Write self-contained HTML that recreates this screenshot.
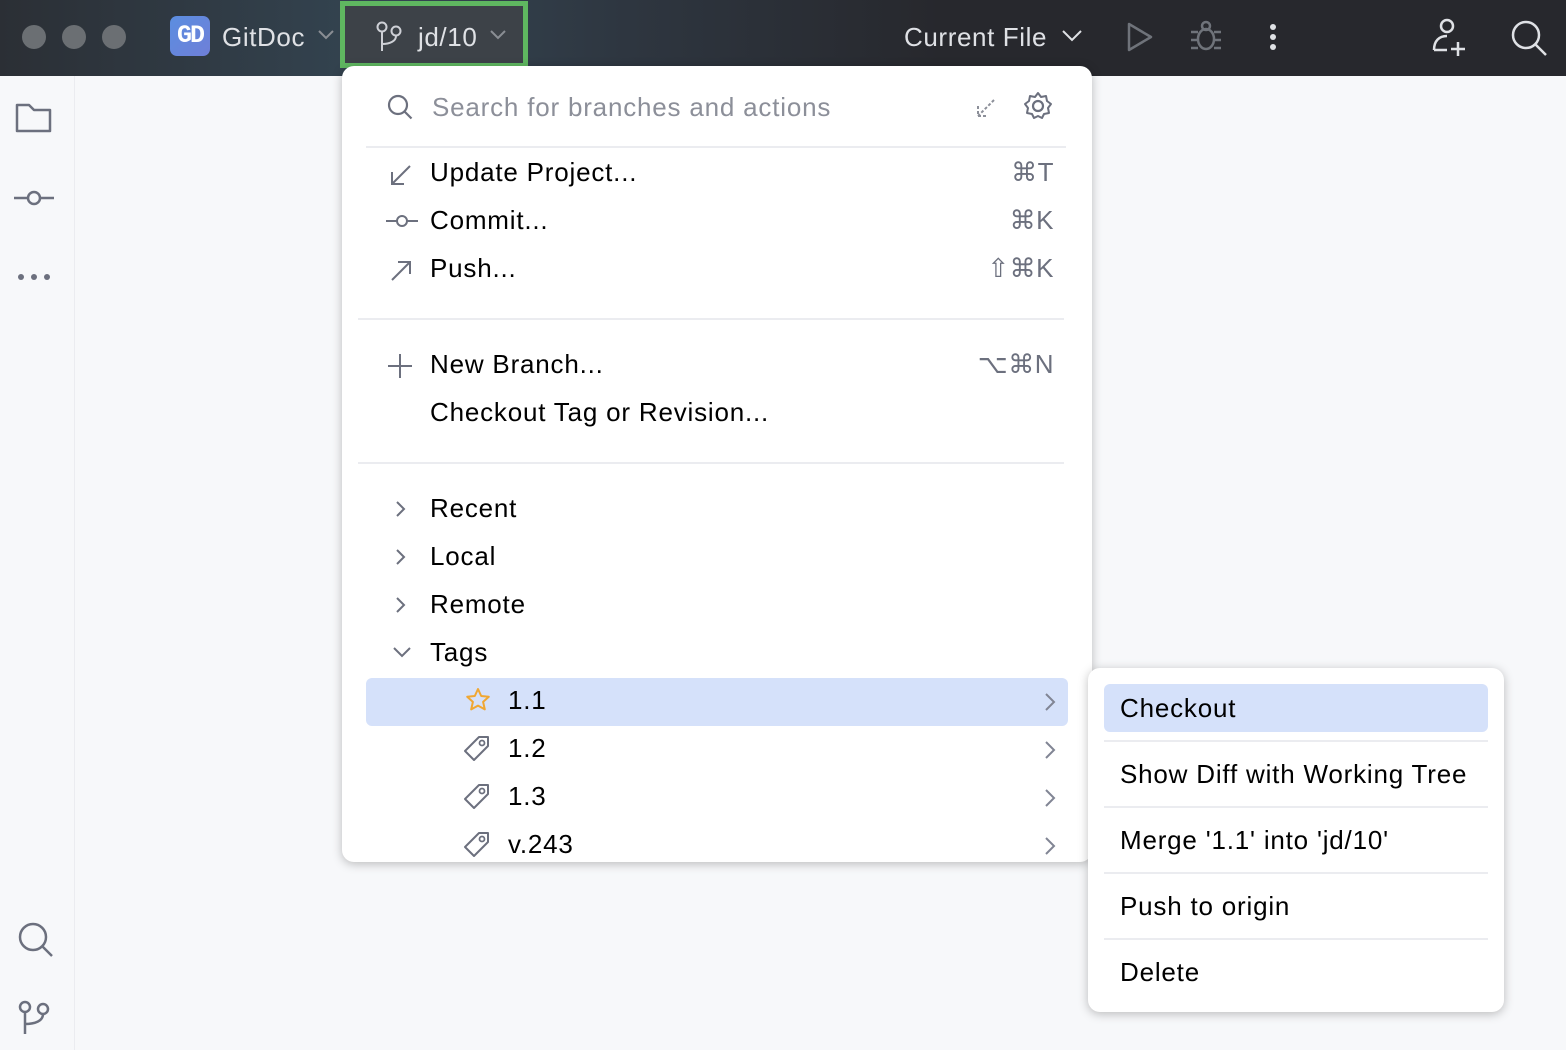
<!DOCTYPE html>
<html><head><meta charset="utf-8"><style>
*{margin:0;padding:0;box-sizing:border-box}
body{width:1566px;height:1050px;overflow:hidden;background:#f7f8fa;font-family:"Liberation Sans",sans-serif;position:relative;color:#000}
.a{position:absolute;white-space:nowrap}
.top{position:absolute;left:0;top:0;width:1566px;height:76px;background:linear-gradient(90deg,#2b2f35 0%,#344552 25%,#2e3640 40%,#27282d 60%,#27282d 100%)}
.side{position:absolute;left:0;top:76px;width:75px;height:974px;background:#f7f8fa;border-right:1px solid #ebecf0}
.pop{position:absolute;left:342px;top:66px;width:750px;height:796px;background:#fff;border-radius:12px;box-shadow:0 2px 10px rgba(0,0,0,.25);overflow:hidden}
.t{font-size:26px;color:#000;letter-spacing:0.8px}
.sc{font-size:26px;color:#6c707e;letter-spacing:0.5px}
.sep{position:absolute;height:2px;background:#ebecf0}
.sub{position:absolute;left:1088px;top:668px;width:416px;height:344px;background:#fff;border-radius:12px;box-shadow:0 2px 10px rgba(0,0,0,.25)}
</style></head><body>
<div class="top"></div>
<div class="a" style="left:22px;top:25px;width:24px;height:24px;border-radius:50%;background:#6b6f73"></div>
<div class="a" style="left:62px;top:25px;width:24px;height:24px;border-radius:50%;background:#6b6f73"></div>
<div class="a" style="left:102px;top:25px;width:24px;height:24px;border-radius:50%;background:#6b6f73"></div>
<div class="a" style="left:170px;top:16px;width:40px;height:40px;border-radius:7px;background:linear-gradient(135deg,#5b8ee0,#6f7fd8);color:#fff;font-size:25px;font-weight:bold;font-family:'Liberation Mono',monospace;line-height:40px;text-align:center;letter-spacing:-2px">GD</div>
<div class="a" style="left:222px;top:22px;font-size:26px;color:#dfe1e5;letter-spacing:0.6px">GitDoc</div>
<svg class="a" style="left:316px;top:28px" width="20" height="14"><path d="M3 3l7 7 7-7" stroke="#8a8e94" stroke-width="2" fill="none"/></svg>
<div class="a" style="left:340px;top:1px;width:188px;height:67px;border:5px solid #5fb760;background:#3d4248"></div>
<svg class="a" style="left:374px;top:20px" width="34" height="34"><circle cx="8" cy="7" r="4.5" stroke="#ced0d6" stroke-width="2" fill="none"/><circle cx="22" cy="11" r="4.5" stroke="#ced0d6" stroke-width="2" fill="none"/><path d="M8 12v19M8 24c8 0 14-3 14-8" stroke="#ced0d6" stroke-width="2" fill="none"/></svg>
<div class="a" style="left:418px;top:22px;font-size:26px;color:#dfe1e5;letter-spacing:0.6px">jd/10</div>
<svg class="a" style="left:488px;top:28px" width="20" height="14"><path d="M3 3l7 7 7-7" stroke="#8a8e94" stroke-width="2" fill="none"/></svg>
<div class="a" style="left:904px;top:22px;font-size:26px;color:#dfe1e5;letter-spacing:0.6px">Current File</div>
<svg class="a" style="left:1060px;top:28px" width="24" height="16"><path d="M3 3l9 9 9-9" stroke="#dfe1e5" stroke-width="2" fill="none"/></svg>
<svg class="a" style="left:1122px;top:20px" width="34" height="34"><path d="M7 4l22 13-22 13z" stroke="#6f737a" stroke-width="2.5" fill="none" stroke-linejoin="round"/></svg>
<svg class="a" style="left:1188px;top:18px" width="36" height="36"><ellipse cx="18" cy="21" rx="8" ry="10" stroke="#6f737a" stroke-width="2.5" fill="none"/><circle cx="18" cy="8" r="4" stroke="#6f737a" stroke-width="2.5" fill="none"/><path d="M3 14h7M26 14h7M3 22h7M26 22h7M3 30h7M26 30h7" stroke="#6f737a" stroke-width="2.5"/></svg>
<div class="a" style="left:1270px;top:24px;width:6px;height:6px;border-radius:3px;background:#dfe1e5"></div>
<div class="a" style="left:1270px;top:34px;width:6px;height:6px;border-radius:3px;background:#dfe1e5"></div>
<div class="a" style="left:1270px;top:44px;width:6px;height:6px;border-radius:3px;background:#dfe1e5"></div>
<svg class="a" style="left:1430px;top:16px" width="40" height="42"><circle cx="17" cy="10" r="6" stroke="#dfe1e5" stroke-width="2.5" fill="none"/><path d="M4 34c0-9 5-14 13-14M4 34h13M28 26v14M21 33h14" stroke="#dfe1e5" stroke-width="2.5" fill="none"/></svg>
<svg class="a" style="left:1508px;top:17px" width="42" height="42"><circle cx="18" cy="18" r="13" stroke="#dfe1e5" stroke-width="2.5" fill="none"/><path d="M27 27l11 11" stroke="#dfe1e5" stroke-width="2.5"/></svg>

<div class="side"></div>
<svg class="a" style="left:14px;top:100px" width="40" height="36"><path d="M3 5h12l5 5h16v21H3z" stroke="#6c707e" stroke-width="2.5" fill="none" stroke-linejoin="round"/></svg>
<svg class="a" style="left:12px;top:186px" width="44" height="24"><circle cx="22" cy="12" r="6" stroke="#6c707e" stroke-width="2.5" fill="none"/><path d="M2 12h14M28 12h14" stroke="#6c707e" stroke-width="2.5"/></svg>
<div class="a" style="left:18px;top:274px;width:6px;height:6px;border-radius:3px;background:#6c707e"></div>
<div class="a" style="left:31px;top:274px;width:6px;height:6px;border-radius:3px;background:#6c707e"></div>
<div class="a" style="left:44px;top:274px;width:6px;height:6px;border-radius:3px;background:#6c707e"></div>
<svg class="a" style="left:16px;top:920px" width="40" height="40"><circle cx="17" cy="17" r="13" stroke="#6c707e" stroke-width="2.5" fill="none"/><path d="M26 26l10 10" stroke="#6c707e" stroke-width="2.5"/></svg>
<svg class="a" style="left:14px;top:998px" width="40" height="40"><circle cx="11" cy="9" r="5" stroke="#6c707e" stroke-width="2.5" fill="none"/><circle cx="29" cy="11" r="5" stroke="#6c707e" stroke-width="2.5" fill="none"/><path d="M11 14v22M11 26c10 0 18-3 18-10" stroke="#6c707e" stroke-width="2.5" fill="none"/></svg>

<div class="pop">
<svg class="a" style="left:44px;top:27px" width="28" height="28"><circle cx="12" cy="12" r="9" stroke="#6c707e" stroke-width="2.2" fill="none"/><path d="M18.5 18.5l7 7" stroke="#6c707e" stroke-width="2.2"/></svg>
<div class="a" style="left:90px;top:26px;font-size:26px;color:#8c8f99;letter-spacing:0.8px">Search for branches and actions</div>
<svg class="a" style="left:632px;top:30px" width="24" height="24"><path d="M20 4L4 20M4 10v10h10" stroke="#8c8f99" stroke-width="2" fill="none" stroke-dasharray="3 2"/></svg>
<svg class="a" style="left:680px;top:24px" width="32" height="32"><circle cx="16" cy="16" r="5" stroke="#6c707e" stroke-width="2.2" fill="none"/><path d="M16 3l3 4 5-1 1 5 4 3-3 4 1 5-5 1-2 4-4-2-4 2-2-4-5-1 1-5-3-4 4-3 1-5 5 1z" stroke="#6c707e" stroke-width="2" fill="none" stroke-linejoin="round"/></svg>
<div class="sep" style="left:24px;top:80px;width:700px"></div>
<svg class="a" style="left:46px;top:96px" width="26" height="26"><path d="M22 4L4 22M4 10v12h12" stroke="#6c707e" stroke-width="2" fill="none"/></svg>
<div class="a t" style="left:88px;top:91px">Update Project...</div><div class="a sc" style="right:38px;top:91px">⌘T</div>
<svg class="a" style="left:44px;top:146px" width="32" height="18"><circle cx="16" cy="9" r="5" stroke="#6c707e" stroke-width="2" fill="none"/><path d="M0 9h11M21 9h11" stroke="#6c707e" stroke-width="2"/></svg>
<div class="a t" style="left:88px;top:139px">Commit...</div><div class="a sc" style="right:38px;top:139px">⌘K</div>
<svg class="a" style="left:46px;top:192px" width="26" height="26"><path d="M4 22L22 4M10 4h12v12" stroke="#6c707e" stroke-width="2" fill="none"/></svg>
<div class="a t" style="left:88px;top:187px">Push...</div><div class="a sc" style="right:38px;top:187px">⇧⌘K</div>
<div class="sep" style="left:16px;top:252px;width:706px"></div>
<svg class="a" style="left:44px;top:286px" width="28" height="28"><path d="M14 2v24M2 14h24" stroke="#6c707e" stroke-width="2"/></svg>
<div class="a t" style="left:88px;top:283px">New Branch...</div><div class="a sc" style="right:38px;top:283px">⌥⌘N</div>
<div class="a t" style="left:88px;top:331px">Checkout Tag or Revision...</div>
<div class="sep" style="left:16px;top:396px;width:706px"></div>
<svg class="a" style="left:50px;top:432px" width="16" height="22"><path d="M5 4l7 7-7 7" stroke="#6c707e" stroke-width="2" fill="none"/></svg>
<div class="a t" style="left:88px;top:427px">Recent</div>
<svg class="a" style="left:50px;top:480px" width="16" height="22"><path d="M5 4l7 7-7 7" stroke="#6c707e" stroke-width="2" fill="none"/></svg>
<div class="a t" style="left:88px;top:475px">Local</div>
<svg class="a" style="left:50px;top:528px" width="16" height="22"><path d="M5 4l7 7-7 7" stroke="#6c707e" stroke-width="2" fill="none"/></svg>
<div class="a t" style="left:88px;top:523px">Remote</div>
<svg class="a" style="left:49px;top:578px" width="22" height="16"><path d="M3 4l8 8 8-8" stroke="#6c707e" stroke-width="2" fill="none"/></svg>
<div class="a t" style="left:88px;top:571px">Tags</div>
<div class="a" style="left:24px;top:612px;width:702px;height:48px;background:#d5e1fa;border-radius:6px"></div>
<svg class="a" style="left:122px;top:620px" width="28" height="28"><path d="M14 3l3.2 7 7.6.8-5.7 5.1 1.7 7.5L14 19.6l-6.8 3.8 1.7-7.5L3.2 10.8l7.6-.8z" stroke="#f0a732" stroke-width="2" fill="none" stroke-linejoin="round"/></svg>
<div class="a t" style="left:166px;top:619px">1.1</div>
<svg class="a" style="left:700px;top:625px" width="16" height="22"><path d="M4 3l8 8-8 8" stroke="#818594" stroke-width="2" fill="none"/></svg>
<svg class="a" style="left:120px;top:668px" width="30" height="30"><path d="M17 3h9v9L12 26 3 17z" stroke="#6c707e" stroke-width="2" fill="none" stroke-linejoin="round"/><circle cx="20" cy="9" r="2.5" stroke="#6c707e" stroke-width="1.8" fill="none"/></svg>
<div class="a t" style="left:166px;top:667px">1.2</div>
<svg class="a" style="left:700px;top:673px" width="16" height="22"><path d="M4 3l8 8-8 8" stroke="#818594" stroke-width="2" fill="none"/></svg>
<svg class="a" style="left:120px;top:716px" width="30" height="30"><path d="M17 3h9v9L12 26 3 17z" stroke="#6c707e" stroke-width="2" fill="none" stroke-linejoin="round"/><circle cx="20" cy="9" r="2.5" stroke="#6c707e" stroke-width="1.8" fill="none"/></svg>
<div class="a t" style="left:166px;top:715px">1.3</div>
<svg class="a" style="left:700px;top:721px" width="16" height="22"><path d="M4 3l8 8-8 8" stroke="#818594" stroke-width="2" fill="none"/></svg>
<svg class="a" style="left:120px;top:764px" width="30" height="30"><path d="M17 3h9v9L12 26 3 17z" stroke="#6c707e" stroke-width="2" fill="none" stroke-linejoin="round"/><circle cx="20" cy="9" r="2.5" stroke="#6c707e" stroke-width="1.8" fill="none"/></svg>
<div class="a t" style="left:166px;top:763px">v.243</div>
<svg class="a" style="left:700px;top:769px" width="16" height="22"><path d="M4 3l8 8-8 8" stroke="#818594" stroke-width="2" fill="none"/></svg>
</div>

<div class="sub">
<div class="a" style="left:16px;top:16px;width:384px;height:48px;background:#d5e1fa;border-radius:6px"></div>
<div class="a t" style="left:32px;top:25px">Checkout</div>
<div class="sep" style="left:16px;top:72px;width:384px"></div>
<div class="a t" style="left:32px;top:91px">Show Diff with Working Tree</div>
<div class="sep" style="left:16px;top:138px;width:384px"></div>
<div class="a t" style="left:32px;top:157px">Merge '1.1' into 'jd/10'</div>
<div class="sep" style="left:16px;top:204px;width:384px"></div>
<div class="a t" style="left:32px;top:223px">Push to origin</div>
<div class="sep" style="left:16px;top:270px;width:384px"></div>
<div class="a t" style="left:32px;top:289px">Delete</div>
</div>
</body></html>
